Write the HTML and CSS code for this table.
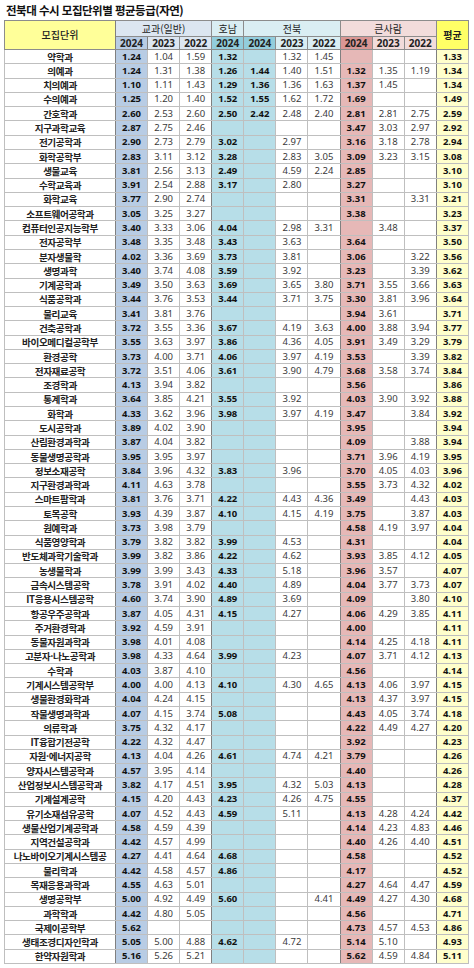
FILE: index.html
```html
<!DOCTYPE html>
<html lang="ko">
<head>
<meta charset="utf-8">
<title>전북대 수시 모집단위별 평균등급(자연)</title>
<link rel="stylesheet" href="styles.css">
</head>
<body>
<h1 class="title">전북대 수시 모집단위별 평균등급(자연)</h1>
<table class="grades">
<colgroup>
<col class="c-name"><col class="c-blue"><col><col><col class="c-teal"><col class="c-teal"><col><col><col class="c-pink"><col><col><col class="c-yel">
</colgroup>
<thead>
<tr class="h1">
<th rowspan="2" class="h-name">모집단위</th>
<th colspan="3" class="h-gyo">교과(일반)</th>
<th class="h-hon">호남</th>
<th colspan="3" class="h-jb">전북</th>
<th colspan="3" class="h-big">큰사람</th>
<th rowspan="2" class="h-avg">평균</th>
</tr>
<tr class="h2">
<th class="y-blue">2024</th><th class="y-gyo">2023</th><th class="y-gyo">2022</th>
<th class="y-teal">2024</th>
<th class="y-teal">2024</th><th class="y-jb">2023</th><th class="y-jb">2022</th>
<th class="y-pink">2024</th><th class="y-big">2023</th><th class="y-big">2022</th>
</tr>
</thead>
<tbody>
<tr><th>약학과</th><td>1.24</td><td>1.04</td><td>1.59</td><td>1.32</td><td></td><td>1.32</td><td>1.45</td><td></td><td></td><td></td><td>1.33</td></tr>
<tr><th>의예과</th><td>1.24</td><td>1.31</td><td>1.38</td><td>1.26</td><td>1.44</td><td>1.40</td><td>1.51</td><td>1.32</td><td>1.35</td><td>1.19</td><td>1.34</td></tr>
<tr><th>치의예과</th><td>1.10</td><td>1.11</td><td>1.43</td><td>1.29</td><td>1.36</td><td>1.36</td><td>1.63</td><td>1.37</td><td>1.45</td><td></td><td>1.34</td></tr>
<tr><th>수의예과</th><td>1.25</td><td>1.20</td><td>1.40</td><td>1.52</td><td>1.55</td><td>1.62</td><td>1.72</td><td>1.69</td><td></td><td></td><td>1.49</td></tr>
<tr><th>간호학과</th><td>2.60</td><td>2.53</td><td>2.60</td><td>2.50</td><td>2.42</td><td>2.48</td><td>2.40</td><td>2.81</td><td>2.81</td><td>2.75</td><td>2.59</td></tr>
<tr><th>지구과학교육</th><td>2.87</td><td>2.75</td><td>2.46</td><td></td><td></td><td></td><td></td><td>3.47</td><td>3.03</td><td>2.97</td><td>2.92</td></tr>
<tr><th>전기공학과</th><td>2.90</td><td>2.73</td><td>2.79</td><td>3.02</td><td></td><td>2.97</td><td></td><td>3.16</td><td>3.18</td><td>2.78</td><td>2.94</td></tr>
<tr><th>화학공학부</th><td>2.83</td><td>3.11</td><td>3.12</td><td>3.28</td><td></td><td>2.83</td><td>3.05</td><td>3.09</td><td>3.23</td><td>3.15</td><td>3.08</td></tr>
<tr><th>생물교육</th><td>3.81</td><td>2.56</td><td>3.13</td><td>2.49</td><td></td><td>4.59</td><td>2.24</td><td>2.85</td><td></td><td></td><td>3.10</td></tr>
<tr><th>수학교육과</th><td>3.91</td><td>2.54</td><td>2.88</td><td>3.17</td><td></td><td>2.80</td><td></td><td>3.27</td><td></td><td></td><td>3.10</td></tr>
<tr><th>화학교육</th><td>3.77</td><td>2.90</td><td>2.74</td><td></td><td></td><td></td><td></td><td>3.31</td><td></td><td>3.31</td><td>3.21</td></tr>
<tr><th>소프트웨어공학과</th><td>3.05</td><td>3.25</td><td>3.27</td><td></td><td></td><td></td><td></td><td>3.38</td><td></td><td></td><td>3.23</td></tr>
<tr><th>컴퓨터인공지능학부</th><td>3.40</td><td>3.33</td><td>3.06</td><td>4.04</td><td></td><td>2.98</td><td>3.31</td><td></td><td>3.48</td><td></td><td>3.37</td></tr>
<tr><th>전자공학부</th><td>3.48</td><td>3.35</td><td>3.48</td><td>3.43</td><td></td><td>3.63</td><td></td><td>3.64</td><td></td><td></td><td>3.50</td></tr>
<tr><th>분자생물학</th><td>4.02</td><td>3.36</td><td>3.69</td><td>3.73</td><td></td><td>3.81</td><td></td><td>3.06</td><td></td><td>3.22</td><td>3.56</td></tr>
<tr><th>생명과학</th><td>3.40</td><td>3.74</td><td>4.08</td><td>3.59</td><td></td><td>3.92</td><td></td><td>3.23</td><td></td><td>3.39</td><td>3.62</td></tr>
<tr><th>기계공학과</th><td>3.49</td><td>3.50</td><td>3.63</td><td>3.69</td><td></td><td>3.65</td><td>3.80</td><td>3.71</td><td>3.55</td><td>3.66</td><td>3.63</td></tr>
<tr><th>식품공학과</th><td>3.44</td><td>3.76</td><td>3.53</td><td>3.44</td><td></td><td>3.71</td><td>3.75</td><td>3.30</td><td>3.81</td><td>3.96</td><td>3.64</td></tr>
<tr><th>물리교육</th><td>3.41</td><td>3.81</td><td>3.76</td><td></td><td></td><td></td><td></td><td>3.94</td><td>3.61</td><td></td><td>3.71</td></tr>
<tr><th>건축공학과</th><td>3.72</td><td>3.55</td><td>3.36</td><td>3.67</td><td></td><td>4.19</td><td>3.63</td><td>4.00</td><td>3.88</td><td>3.94</td><td>3.77</td></tr>
<tr><th>바이오메디컬공학부</th><td>3.55</td><td>3.63</td><td>3.97</td><td>3.86</td><td></td><td>4.36</td><td>4.05</td><td>3.91</td><td>3.49</td><td>3.29</td><td>3.79</td></tr>
<tr><th>환경공학</th><td>3.73</td><td>4.00</td><td>3.71</td><td>4.06</td><td></td><td>3.97</td><td>4.19</td><td>3.53</td><td></td><td>3.39</td><td>3.82</td></tr>
<tr><th>전자재료공학</th><td>3.72</td><td>3.51</td><td>4.06</td><td>3.61</td><td></td><td>3.90</td><td>4.79</td><td>3.68</td><td>3.58</td><td>3.74</td><td>3.84</td></tr>
<tr><th>조경학과</th><td>4.13</td><td>3.94</td><td>3.82</td><td></td><td></td><td></td><td></td><td>3.56</td><td></td><td></td><td>3.86</td></tr>
<tr><th>통계학과</th><td>3.64</td><td>3.85</td><td>4.21</td><td>3.55</td><td></td><td>3.92</td><td></td><td>4.03</td><td>3.90</td><td>3.92</td><td>3.88</td></tr>
<tr><th>화학과</th><td>4.33</td><td>3.62</td><td>3.96</td><td>3.98</td><td></td><td>3.97</td><td>4.19</td><td>3.47</td><td></td><td>3.84</td><td>3.92</td></tr>
<tr><th>도시공학과</th><td>3.89</td><td>4.02</td><td>3.90</td><td></td><td></td><td></td><td></td><td>3.95</td><td></td><td></td><td>3.94</td></tr>
<tr><th>산림환경과학과</th><td>3.87</td><td>4.04</td><td>3.82</td><td></td><td></td><td></td><td></td><td>4.09</td><td></td><td>3.88</td><td>3.94</td></tr>
<tr><th>동물생명공학과</th><td>3.95</td><td>3.95</td><td>3.97</td><td></td><td></td><td></td><td></td><td>3.71</td><td>3.96</td><td>4.19</td><td>3.95</td></tr>
<tr><th>정보소재공학</th><td>3.84</td><td>3.96</td><td>4.32</td><td>3.83</td><td></td><td>3.96</td><td></td><td>3.70</td><td>4.05</td><td>4.03</td><td>3.96</td></tr>
<tr><th>지구환경과학과</th><td>4.11</td><td>4.63</td><td>3.78</td><td></td><td></td><td></td><td></td><td>3.55</td><td>3.73</td><td>4.32</td><td>4.02</td></tr>
<tr><th>스마트팜학과</th><td>3.81</td><td>3.76</td><td>3.71</td><td>4.22</td><td></td><td>4.43</td><td>4.36</td><td>3.49</td><td></td><td>4.43</td><td>4.03</td></tr>
<tr><th>토목공학</th><td>3.93</td><td>4.39</td><td>3.87</td><td>4.10</td><td></td><td>4.15</td><td>4.19</td><td>3.75</td><td></td><td>3.87</td><td>4.03</td></tr>
<tr><th>원예학과</th><td>3.73</td><td>3.98</td><td>3.79</td><td></td><td></td><td></td><td></td><td>4.58</td><td>4.19</td><td>3.97</td><td>4.04</td></tr>
<tr><th>식품영양학과</th><td>3.79</td><td>3.82</td><td>3.82</td><td>3.99</td><td></td><td>4.53</td><td></td><td>4.31</td><td></td><td></td><td>4.04</td></tr>
<tr><th>반도체과학기술학과</th><td>3.99</td><td>3.82</td><td>3.86</td><td>4.22</td><td></td><td>4.62</td><td></td><td>3.93</td><td>3.85</td><td>4.12</td><td>4.05</td></tr>
<tr><th>농생물학과</th><td>3.99</td><td>3.99</td><td>3.43</td><td>4.33</td><td></td><td>5.18</td><td></td><td>3.96</td><td>3.57</td><td></td><td>4.07</td></tr>
<tr><th>금속시스템공학</th><td>3.78</td><td>3.91</td><td>4.02</td><td>4.40</td><td></td><td>4.89</td><td></td><td>4.04</td><td>3.77</td><td>3.73</td><td>4.07</td></tr>
<tr><th>IT응용시스템공학</th><td>4.60</td><td>3.74</td><td>3.90</td><td>4.89</td><td></td><td>3.69</td><td></td><td>4.09</td><td></td><td>3.80</td><td>4.10</td></tr>
<tr><th>항공우주공학과</th><td>3.87</td><td>4.05</td><td>4.31</td><td>4.15</td><td></td><td>4.27</td><td></td><td>4.06</td><td>4.29</td><td>3.85</td><td>4.11</td></tr>
<tr><th>주거환경학과</th><td>3.92</td><td>4.59</td><td>3.91</td><td></td><td></td><td></td><td></td><td>4.00</td><td></td><td></td><td>4.11</td></tr>
<tr><th>동물자원과학과</th><td>3.98</td><td>4.01</td><td>4.08</td><td></td><td></td><td></td><td></td><td>4.14</td><td>4.25</td><td>4.18</td><td>4.11</td></tr>
<tr><th>고분자·나노공학과</th><td>3.98</td><td>4.33</td><td>4.64</td><td>3.99</td><td></td><td>4.23</td><td></td><td>4.07</td><td>3.71</td><td>4.12</td><td>4.13</td></tr>
<tr><th>수학과</th><td>4.03</td><td>3.87</td><td>4.10</td><td></td><td></td><td></td><td></td><td>4.56</td><td></td><td></td><td>4.14</td></tr>
<tr><th>기계시스템공학부</th><td>4.00</td><td>4.00</td><td>4.13</td><td>4.10</td><td></td><td>4.30</td><td>4.65</td><td>4.13</td><td>4.06</td><td>3.97</td><td>4.15</td></tr>
<tr><th>생물환경화학과</th><td>4.04</td><td>4.24</td><td>4.15</td><td></td><td></td><td></td><td></td><td>4.13</td><td>4.37</td><td>3.97</td><td>4.15</td></tr>
<tr><th>작물생명과학과</th><td>4.07</td><td>4.15</td><td>3.74</td><td>5.08</td><td></td><td></td><td></td><td>4.43</td><td>4.05</td><td>3.74</td><td>4.18</td></tr>
<tr><th>의류학과</th><td>3.75</td><td>4.32</td><td>4.17</td><td></td><td></td><td></td><td></td><td>4.22</td><td>4.49</td><td>4.27</td><td>4.20</td></tr>
<tr><th>IT융합기전공학</th><td>4.22</td><td>4.32</td><td>4.47</td><td></td><td></td><td></td><td></td><td>3.92</td><td></td><td></td><td>4.23</td></tr>
<tr><th>자원·에너지공학</th><td>4.13</td><td>4.04</td><td>4.26</td><td>4.61</td><td></td><td>4.74</td><td>4.21</td><td>3.79</td><td></td><td></td><td>4.26</td></tr>
<tr><th>양자시스템공학과</th><td>4.57</td><td>3.95</td><td>4.14</td><td></td><td></td><td></td><td></td><td>4.40</td><td></td><td></td><td>4.26</td></tr>
<tr><th>산업정보시스템공학과</th><td>3.82</td><td>4.17</td><td>4.51</td><td>3.95</td><td></td><td>4.32</td><td>5.03</td><td>4.13</td><td></td><td></td><td>4.28</td></tr>
<tr><th>기계설계공학</th><td>4.15</td><td>4.20</td><td>4.43</td><td>4.23</td><td></td><td>4.26</td><td>4.75</td><td>4.55</td><td></td><td></td><td>4.37</td></tr>
<tr><th>유기소재섬유공학</th><td>4.07</td><td>4.52</td><td>4.43</td><td>4.59</td><td></td><td>5.11</td><td></td><td>4.13</td><td>4.28</td><td>4.24</td><td>4.42</td></tr>
<tr><th>생물산업기계공학과</th><td>4.58</td><td>4.59</td><td>4.39</td><td></td><td></td><td></td><td></td><td>4.14</td><td>4.23</td><td>4.83</td><td>4.46</td></tr>
<tr><th>지역건설공학과</th><td>4.42</td><td>4.57</td><td>4.99</td><td></td><td></td><td></td><td></td><td>4.40</td><td>4.26</td><td>4.40</td><td>4.51</td></tr>
<tr><th>나노바이오기계시스템공</th><td>4.27</td><td>4.41</td><td>4.64</td><td>4.68</td><td></td><td></td><td></td><td>4.58</td><td></td><td></td><td>4.52</td></tr>
<tr><th>물리학과</th><td>4.42</td><td>4.58</td><td>4.57</td><td>4.86</td><td></td><td></td><td></td><td>4.17</td><td></td><td></td><td>4.52</td></tr>
<tr><th>목재응용과학과</th><td>4.55</td><td>4.63</td><td>5.01</td><td></td><td></td><td></td><td></td><td>4.27</td><td>4.64</td><td>4.47</td><td>4.59</td></tr>
<tr><th>생명공학부</th><td>5.00</td><td>4.92</td><td>4.49</td><td>5.60</td><td></td><td></td><td>4.41</td><td>4.49</td><td>4.27</td><td>4.30</td><td>4.68</td></tr>
<tr><th>과학학과</th><td>4.42</td><td>4.80</td><td>5.05</td><td></td><td></td><td></td><td></td><td>4.56</td><td></td><td></td><td>4.71</td></tr>
<tr><th>국제이공학부</th><td>5.62</td><td></td><td></td><td></td><td></td><td></td><td></td><td>4.73</td><td>4.57</td><td>4.53</td><td>4.86</td></tr>
<tr><th>생태조경디자인학과</th><td>5.05</td><td>5.00</td><td>4.88</td><td>4.62</td><td></td><td>4.72</td><td></td><td>5.14</td><td>5.10</td><td></td><td>4.93</td></tr>
<tr><th>한약자원학과</th><td>5.16</td><td>5.26</td><td>5.21</td><td></td><td></td><td></td><td></td><td>5.62</td><td>4.59</td><td>4.84</td><td>5.11</td></tr>
</tbody>
</table>
</body>
</html>
```

FILE: styles.css
```css
html, body {
  margin: 0;
  padding: 0;
  background: #ffffff;
}
body {
  font-family: "Noto Sans", "Noto Sans CJK KR", sans-serif;
  color: #1a1a1a;
}
.title {
  margin: 0;
  padding: 3px 0 0 6px;
  height: 17px;
  box-sizing: border-box;
  font-family: "Noto Sans CJK KR", sans-serif;
  font-size: 11.5px;
  line-height: 14px;
  font-weight: 700;
  letter-spacing: -0.5px;
  color: #111;
}
.grades {
  margin-left: 4px;
  margin-top: 3px;
  width: 465px;
  table-layout: fixed;
  border-collapse: collapse;
  border: 1px solid #555;
}
.grades col.c-name { width: 111px; }
.grades col.c-blue { background: #b8cce4; }
.grades col.c-teal { background: #b7dee8; }
.grades col.c-pink { background: #e6b8b7; }
.grades col.c-yel { background: #ffffcc; }

.grades th, .grades td {
  padding: 0;
  border: 1px solid #bfbfbf;
  text-align: center;
  vertical-align: middle;
  white-space: nowrap;
  overflow: hidden;
}
.grades thead th {
  font-family: "Noto Sans CJK KR", sans-serif;
  font-size: 10px;
  color: #222;
  border-color: #8c8c8c;
}
.grades .h1 th { height: 15px; font-weight: 400; line-height: 14px; }
.grades .h2 th { height: 12px; font-weight: 700; font-family: "Noto Sans", sans-serif; line-height: 12px; }
.grades .h-name { background: #ffff99; font-weight: 500 !important; }
.grades .h-gyo { background: #dce6f1; }
.grades .h-hon { background: #daeef3; }
.grades .h-jb { background: #daeef3; }
.grades .h-big { background: #f2dcdb; }
.grades .h-avg { background: #ffff66; font-weight: 700 !important; }
.grades .y-blue { background: #b8cce4; }
.grades .y-gyo { background: #dce6f1; }
.grades .y-teal { background: #92cddc; }
.grades .y-jb { background: #daeef3; }
.grades .y-pink { background: #da9694; }
.grades .y-big { background: #f2dcdb; }

.grades tbody th {
  height: 13.29px;
  font-family: "Noto Sans CJK KR", sans-serif;
  font-size: 9.6px;
  font-weight: 700;
  letter-spacing: -0.4px;
  line-height: 12px;
  color: #222;
}
.grades tbody td {
  height: 13.29px;
  font-size: 9.5px;
  line-height: 12px;
  font-weight: 400;
  color: #3a3a3a;
}
.grades tbody td:nth-child(2),
.grades tbody td:nth-child(5),
.grades tbody td:nth-child(6),
.grades tbody td:nth-child(9),
.grades tbody td:nth-child(12) {
  font-weight: 700;
  color: #111;
}
.grades th:first-child { border-right: 1px solid #808080; }
.grades td:nth-child(4),
.grades td:nth-child(8),
.grades td:nth-child(11) { border-right: 1px solid #808080; }
```
